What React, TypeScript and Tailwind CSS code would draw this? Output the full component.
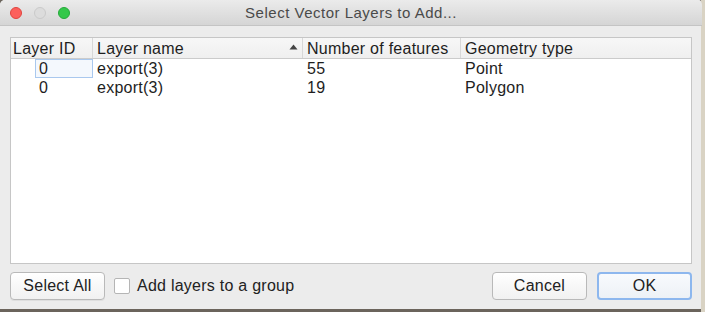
import React from 'react';

const rows = [
  { id: '0', name: 'export(3)', count: '55', geom: 'Point', focus: true },
  { id: '0', name: 'export(3)', count: '19', geom: 'Polygon', focus: false },
];

export default function App() {
  return (
    <div
      className="w-[705px] h-[312px] bg-[#6b645c] relative overflow-hidden"
      style={{ fontFamily: '"Liberation Sans", Arial, sans-serif' }}
    >
      <div className="absolute right-0 top-0 w-[4px] h-[312px] bg-[#d9d3c4]" />
      <div className="w-[703px] h-[309px] bg-[#ececec] rounded-t-[5px] flex flex-col overflow-hidden border-r border-[#bdbdbd]">
        {/* title bar */}
        <div className="h-[26px] shrink-0 bg-gradient-to-b from-[#ebebeb] to-[#d5d5d5] border-b border-[#c4c4c4] flex items-center relative">
          <div className="flex items-center gap-[12px] pl-[10px]">
            <span className="w-[12px] h-[12px] rounded-full bg-[#fc605c] border border-[#e0443e]" />
            <span className="w-[12px] h-[12px] rounded-full bg-[#dcdcdc] border border-[#cacaca]" />
            <span className="w-[12px] h-[12px] rounded-full bg-[#34c84a] border border-[#25a93a]" />
          </div>
          <div className="absolute inset-0 flex items-center justify-center text-[15px] tracking-[0.5px] text-[#4a4a4a] pt-[1px]">
            Select Vector Layers to Add...
          </div>
        </div>

        <div className="flex-1 flex flex-col px-[10px] pt-[11px]">
          {/* table */}
          <div className="h-[227px] bg-white border border-[#c6c6c6] flex flex-col text-[16px] tracking-[0.25px] text-[#1e1e1e]">
            <div className="h-[21px] flex bg-gradient-to-b from-[#f7f7f7] to-[#efefef] border-b border-[#cbcbcb] leading-[21px]">
              <div className="w-[82px] pl-[2px] border-r border-[#d8d8d8]">Layer ID</div>
              <div className="w-[210px] pl-[4px] border-r border-[#d8d8d8] flex justify-between items-center pr-[4px]">
                <span>Layer name</span>
                <svg width="9" height="6" viewBox="0 0 9 6" className="mb-[3px]">
                  <path d="M0.5 5.5 L4.5 0.5 L8.5 5.5 Z" fill="#444" />
                </svg>
              </div>
              <div className="w-[158px] pl-[4px] border-r border-[#d8d8d8]">Number of features</div>
              <div className="flex-1 pl-[4px]">Geometry type</div>
            </div>
            {rows.map((r, i) => (
              <div key={i} className="h-[19px] flex leading-[19px]">
                <div className="w-[82px] pl-[24px] flex">
                  <div
                    className={
                      r.focus
                        ? 'w-[58px] h-[19px] border border-[#a9c8ee] bg-[#f4f8fd] pl-[3px] leading-[17px]'
                        : 'pl-[4px]'
                    }
                  >
                    {r.id}
                  </div>
                </div>
                <div className="w-[210px] pl-[4px]">{r.name}</div>
                <div className="w-[158px] pl-[4px]">{r.count}</div>
                <div className="flex-1 pl-[4px]">{r.geom}</div>
              </div>
            ))}
          </div>

          {/* bottom bar */}
          <div className="flex items-center mt-[8px] text-[16px] tracking-[0.25px] text-[#222]">
            <button className="w-[95px] h-[28px] bg-gradient-to-b from-white to-[#f1f1f1] border border-[#b9b9b9] rounded-[4px] shadow-[0_1px_0_rgba(0,0,0,0.06)]">
              Select All
            </button>
            <span className="ml-[9px] w-[16px] h-[16px] bg-white border border-[#b5b5b5] rounded-[2px]" />
            <span className="ml-[7px]">Add layers to a group</span>
            <div className="flex-1" />
            <button className="w-[95px] h-[28px] bg-gradient-to-b from-white to-[#f1f1f1] border border-[#b9b9b9] rounded-[4px]">
              Cancel
            </button>
            <button className="ml-[10px] w-[95px] h-[28px] bg-gradient-to-b from-[#f8fafd] to-[#edf1f6] border-2 border-[#8db7ee] rounded-[4px]">
              OK
            </button>
          </div>
        </div>
      </div>
    </div>
  );
}
